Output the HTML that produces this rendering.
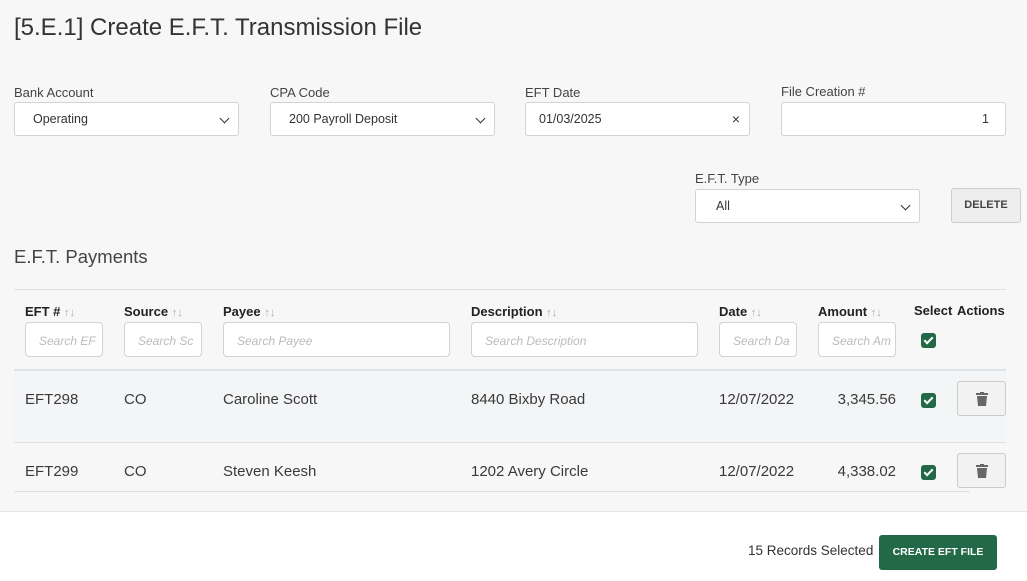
<!DOCTYPE html>
<html><head><style>
*{box-sizing:border-box;margin:0;padding:0}
body{width:1027px;height:581px;background:#f7f7f8;font-family:"Liberation Sans",sans-serif;color:#333;position:relative;overflow:hidden}
.a{position:absolute}
.lbl{font-size:13px;color:#444}
.sel{position:absolute;height:34px;background:#fff;border:1px solid #ced4da;border-radius:3px;font-size:12.5px;color:#333;padding:9px 0 0 18px}
.sel .ch{position:absolute;right:10px;top:12px;width:7px;height:7px;border:solid #333;border-width:0 1.6px 1.6px 0;transform:rotate(45deg)}
.hd{position:absolute;top:304px;font-size:13px;font-weight:bold;color:#222}
.hd span{color:#aaa;font-weight:normal;font-size:11px}
.in{position:absolute;top:322px;height:35px;background:#fff;border:1px solid #ced4da;border-radius:4px;font-size:12px;color:#bbb;font-style:italic;padding:11px 0 0 13px;overflow:hidden;white-space:nowrap}
.cell{position:absolute;font-size:15px;color:#3a3a3a}
.cb{position:absolute;width:15px;height:15px;background:#236847;border-radius:3px}
.cb:after{content:"";position:absolute;left:5px;top:2px;width:3px;height:7px;border:solid #fff;border-width:0 2px 2px 0;transform:rotate(45deg)}
.tb{position:absolute;left:957px;width:49px;height:35px;border:1px solid #ccc;border-radius:3px;background:#f2f2f3}
</style></head><body>
<div class="a" style="left:14px;top:14px;font-size:24px;color:#333">[5.E.1] Create E.F.T. Transmission File</div>

<div class="a lbl" style="left:14px;top:85px">Bank Account</div>
<div class="a lbl" style="left:270px;top:85px">CPA Code</div>
<div class="a lbl" style="left:525px;top:85px">EFT Date</div>
<div class="a lbl" style="left:781px;top:84px">File Creation #</div>
<div class="sel" style="left:14px;top:102px;width:225px">Operating<span class="ch"></span></div>
<div class="sel" style="left:270px;top:102px;width:225px">200 Payroll Deposit<span class="ch"></span></div>
<div class="sel" style="left:525px;top:102px;width:225px;padding-left:13px">01/03/2025<span style="position:absolute;right:9px;top:8px;font-size:14px">×</span></div>
<div class="sel" style="left:781px;top:102px;width:225px;text-align:right;padding-right:16px">1</div>

<div class="a lbl" style="left:695px;top:171px">E.F.T. Type</div>
<div class="sel" style="left:695px;top:189px;width:225px;padding-left:20px">All<span class="ch"></span></div>
<div class="a" style="left:951px;top:188px;width:70px;height:35px;border:1px solid #ccc;border-radius:3px;background:#eee;font-size:11px;font-weight:bold;color:#444;text-align:center;line-height:33px">DELETE</div>

<div class="a" style="left:14px;top:246px;font-size:18.5px;color:#444">E.F.T. Payments</div>
<div class="a" style="left:14px;top:289px;width:992px;height:1px;background:#dee2e6"></div>

<div class="hd" style="left:25px">EFT # <span>↑↓</span></div>
<div class="hd" style="left:124px">Source <span>↑↓</span></div>
<div class="hd" style="left:223px">Payee <span>↑↓</span></div>
<div class="hd" style="left:471px">Description <span>↑↓</span></div>
<div class="hd" style="left:719px">Date <span>↑↓</span></div>
<div class="hd" style="left:818px">Amount <span>↑↓</span></div>
<div class="hd" style="left:914px;top:303px">Select</div>
<div class="hd" style="left:957px;top:303px">Actions</div>
<div class="in" style="left:25px;width:78px">Search EF</div>
<div class="in" style="left:124px;width:78px">Search Sc</div>
<div class="in" style="left:223px;width:227px">Search Payee</div>
<div class="in" style="left:471px;width:227px">Search Description</div>
<div class="in" style="left:719px;width:78px">Search Da</div>
<div class="in" style="left:818px;width:78px">Search Am</div>
<div class="cb" style="left:921px;top:333px"></div>

<div class="a" style="left:14px;top:369px;width:992px;height:2px;background:#dee2e6"></div>
<div class="a" style="left:14px;top:371px;width:992px;height:71px;background:#f4f5f7"></div>
<div class="a" style="left:14px;top:442px;width:992px;height:1px;background:#dee2e6"></div>
<div class="cell" style="left:25px;top:391px">EFT298</div>
<div class="cell" style="left:124px;top:391px">CO</div>
<div class="cell" style="left:223px;top:391px">Caroline Scott</div>
<div class="cell" style="left:471px;top:391px">8440 Bixby Road</div>
<div class="cell" style="left:719px;top:391px">12/07/2022</div>
<div class="cell" style="left:818px;top:391px;width:78px;text-align:right">3,345.56</div>
<div class="cb" style="left:921px;top:393px"></div>
<div class="tb" style="top:381px"><svg style="position:absolute;left:18px;top:10px" width="12" height="14" viewBox="0 0 12 14"><rect x="0" y="1" width="12" height="2" fill="#666"/><rect x="4" y="0" width="4" height="2" fill="#666"/><path d="M1 4h10l-1 10H2z" fill="#666"/></svg></div>

<div class="cell" style="left:25px;top:463px">EFT299</div>
<div class="cell" style="left:124px;top:463px">CO</div>
<div class="cell" style="left:223px;top:463px">Steven Keesh</div>
<div class="cell" style="left:471px;top:463px">1202 Avery Circle</div>
<div class="cell" style="left:719px;top:463px">12/07/2022</div>
<div class="cell" style="left:818px;top:463px;width:78px;text-align:right">4,338.02</div>
<div class="cb" style="left:921px;top:465px"></div>
<div class="tb" style="top:453px"><svg style="position:absolute;left:18px;top:10px" width="12" height="14" viewBox="0 0 12 14"><rect x="0" y="1" width="12" height="2" fill="#666"/><rect x="4" y="0" width="4" height="2" fill="#666"/><path d="M1 4h10l-1 10H2z" fill="#666"/></svg></div>
<div class="a" style="left:14px;top:491px;width:956px;height:1px;background:#dee2e6"></div>

<div class="a" style="left:0;top:511px;width:1027px;height:70px;background:#fff;border-top:1px solid #e3e3e3"></div>
<div class="a" style="left:748px;top:543px;font-size:13.5px;color:#333">15 Records Selected</div>
<div class="a" style="left:879px;top:535px;width:118px;height:35px;background:#236847;border-radius:3px;color:#fff;font-size:10.5px;font-weight:bold;text-align:center;line-height:35px">CREATE EFT FILE</div>
</body></html>
